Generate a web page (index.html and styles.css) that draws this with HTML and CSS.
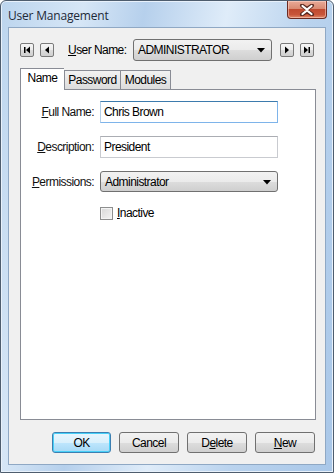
FILE: index.html
```html
<!DOCTYPE html>
<html>
<head>
<meta charset="utf-8">
<link rel="stylesheet" href="styles.css">
</head>
<body>
<div class="window">
  <div class="titlebar">
    <div class="title">User Management</div>
    <div class="close">
      <svg width="16" height="12" viewBox="0 0 16 12"><path d="M3 1.5 L8 5 L13 1.5 M3 10.5 L8 7 L13 10.5" fill="none" stroke="#5a2a22" stroke-width="4" stroke-linecap="round"/><path d="M3.5 2 L8 5.5 L12.5 2 M3.5 10 L8 6.5 L12.5 10" fill="none" stroke="#ffffff" stroke-width="2.2" stroke-linecap="round"/></svg>
    </div>
  </div>
  <div class="client">
    <div class="navrow">
      <div class="navbtn"><svg width="8" height="8" viewBox="0 0 8 8"><rect x="1" y="1" width="1.5" height="6" fill="#000"/><path d="M7 0.5 L7 7.5 L3 4 Z" fill="#000"/></svg></div>
      <div class="navbtn"><svg width="8" height="8" viewBox="0 0 8 8"><path d="M6 0.5 L6 7.5 L2 4 Z" fill="#000"/></svg></div>
      <div class="uname"><span class="u">U</span>ser Name:</div>
      <div class="combo wide"><span>ADMINISTRATOR</span><svg class="arr" width="8" height="5" viewBox="0 0 8 5"><path d="M0 0 H8 L4 4.5 Z" fill="#000"/></svg></div>
      <div class="spacer"></div>
      <div class="navbtn"><svg width="8" height="8" viewBox="0 0 8 8"><path d="M2 0.5 L2 7.5 L6 4 Z" fill="#000"/></svg></div>
      <div class="navbtn"><svg width="8" height="8" viewBox="0 0 8 8"><path d="M1 0.5 L1 7.5 L5 4 Z" fill="#000"/><rect x="5.5" y="1" width="1.5" height="6" fill="#000"/></svg></div>
    </div>
    <div class="tabs">
      <div class="tab active">Name</div>
      <div class="tab t2">Password</div>
      <div class="tab t3">Modules</div>
    </div>
    <div class="panel">
      <div class="form">
        <div class="lbl"><span class="u">F</span>ull Name:</div>
        <div class="input focus">Chris Brown</div>
        <div class="lbl"><span class="u">D</span>escription:</div>
        <div class="input">President</div>
        <div class="lbl"><span class="u">P</span>ermissions:</div>
        <div class="combo"><span>Administrator</span><svg class="arr" width="8" height="5" viewBox="0 0 8 5"><path d="M0 0 H8 L4 4.5 Z" fill="#000"/></svg></div>
        <div></div>
        <div class="check"><span class="box"></span><span><span class="u">I</span>nactive</span></div>
      </div>
    </div>
    <div class="buttons">
      <div class="btn default">OK</div>
      <div class="btn">Cancel</div>
      <div class="btn">D<span class="u">e</span>lete</div>
      <div class="btn"><span class="u">N</span>ew</div>
    </div>
  </div>
</div>
</body>
</html>
```
FILE: styles.css
```css
html, body {
  margin: 0;
  padding: 0;
  width: 334px;
  height: 473px;
  overflow: hidden;
  background: #ffffff;
}
body {
  font-family: "Liberation Sans", Arial, sans-serif;
  font-size: 12px;
  letter-spacing: -0.55px;
  color: #000;
}
.window {
  box-sizing: border-box;
  width: 334px;
  height: 473px;
  border: 1px solid #4e5d6e;
  border-radius: 6px 6px 0 0;
  background: linear-gradient(100deg, #bcd5ee 0%, #d6e6f6 20%, #b6d0ec 35%, #dfecf9 55%, #bad3ee 75%, #a9c7e8 100%);
  display: flex;
  flex-direction: column;
  box-shadow: inset 0 0 0 1px #e8f1fb;
}
.titlebar {
  height: 26px;
  display: flex;
  justify-content: space-between;
  align-items: flex-start;
  padding: 0 6px 0 7px;
}
.title {
  font-family: "Open Sans", "DejaVu Sans", sans-serif;
  font-size: 12px;
  color: #1e2a38;
  margin-top: 6px;
  letter-spacing: -0.2px;
}
.close {
  width: 40px;
  height: 18px;
  box-sizing: border-box;
  border: 1px solid #6b2a22;
  border-top: none;
  border-radius: 0 0 4px 4px;
  background: linear-gradient(#e9aa98 0%, #d98a72 45%, #c04a30 50%, #c8553a 80%, #e08a6a 100%);
  display: flex;
  align-items: center;
  justify-content: center;
  box-shadow: inset 0 0 0 1px rgba(255,220,210,0.5);
}
.client {
  flex: 1;
  margin: 0 7px 7px 7px;
  border: 1px solid #8fa8c4;
  background: #f0f0f0;
  display: flex;
  flex-direction: column;
  padding: 11px 10px 11px 11px;
  box-sizing: border-box;
}
.navrow {
  display: flex;
  align-items: center;
  height: 22px;
}
.navbtn {
  width: 14px;
  height: 14px;
  box-sizing: border-box;
  border: 1px solid #7a7a7a;
  border-radius: 2px;
  background: linear-gradient(#f6f6f6 0%, #ebebeb 50%, #dcdcdc 51%, #cfcfcf 100%);
  display: flex;
  align-items: center;
  justify-content: center;
  margin-right: 6px;
}
.navbtn:last-child { margin-right: 1px; }
.uname {
  margin-left: 8px;
  width: 65px;
}
.u { text-decoration: underline; }
.combo {
  box-sizing: border-box;
  height: 22px;
  border: 1px solid #707070;
  border-radius: 3px;
  background: linear-gradient(#f2f2f2 0%, #ebebeb 50%, #dddddd 51%, #cfcfcf 100%);
  display: flex;
  align-items: center;
  justify-content: space-between;
  padding: 0 6px 0 4px;
}
.combo.wide {
  width: 139px;
}
.arr { margin-top: 1px; }
.spacer { flex: 1; }
.tabs {
  display: flex;
  align-items: flex-end;
  margin-top: 7px;
  height: 21px;
}
.tab {
  box-sizing: border-box;
  height: 19px;
  border: 1px solid #898c95;
  border-bottom: none;
  background: linear-gradient(#f2f2f2, #dcdcdc);
  padding-top: 2px;
  text-align: center;
}
.tab.active {
  width: 44px;
  height: 22px;
  background: #ffffff;
  border-right: none;
  padding-top: 2px;
  margin-bottom: -1px;
  position: relative;
  z-index: 1;
}
.tab.t2 { width: 57px; }
.tab.t3 { width: 50px; border-left: none; }
.panel {
  box-sizing: border-box;
  width: 296px;
  height: 331px;
  background: #ffffff;
  border: 1px solid #898c95;
  padding: 11px 0 0 0;
}
.form {
  display: grid;
  grid-template-columns: 79px 178px;
  row-gap: 13px;
  align-items: center;
}
.lbl {
  text-align: right;
  padding-right: 6px;
  color: #111;
}
.input {
  box-sizing: border-box;
  height: 22px;
  border: 1px solid #c9cbd0;
  border-top-color: #abadb3;
  padding: 3px 3px 0 3px;
  background: #fff;
}
.input.focus {
  border-color: #7eb4ea;
  border-top-color: #3d7bad;
  border-left-color: #b5cfe7;
}
.form .combo {
  height: 21px;
}
.check {
  display: flex;
  align-items: center;
  gap: 4px;
  height: 14px;
  margin-top: 1px;
}
.box {
  width: 13px;
  height: 13px;
  box-sizing: border-box;
  border: 1px solid #8e8f8f;
  background: linear-gradient(135deg, #d8d8d8, #f4f4f4);
  box-shadow: inset 0 0 0 1px #f4f4f4;
}
.buttons {
  display: flex;
  justify-content: flex-end;
  gap: 8px;
  margin-top: 12px;
}
.btn {
  box-sizing: border-box;
  width: 60px;
  height: 21px;
  border: 1px solid #707070;
  border-radius: 3px;
  background: linear-gradient(#f2f2f2 0%, #ebebeb 50%, #dddddd 51%, #cfcfcf 100%);
  display: flex;
  align-items: center;
  justify-content: center;
}
.btn.default {
  width: 59px;
  border-color: #3c7fb1;
  background: linear-gradient(#eaf6fd 0%, #d9f0fc 50%, #bee6fd 51%, #a7d9f5 100%);
  box-shadow: inset 0 0 0 1px #48d0f8;
}
```
